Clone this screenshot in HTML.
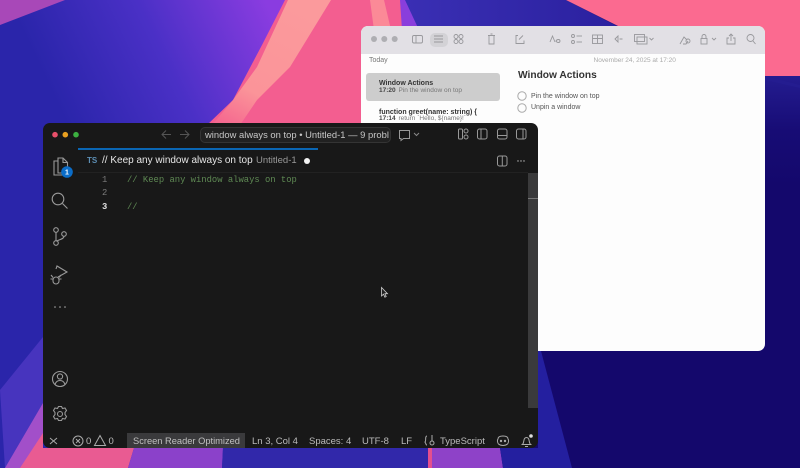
<!DOCTYPE html>
<html><head><meta charset="utf-8"><style>
html,body{margin:0;padding:0;width:800px;height:468px;overflow:hidden;background:#14086c}
body{position:relative;font-family:"Liberation Sans",sans-serif}
svg{position:absolute;overflow:visible}
.t{position:absolute;white-space:nowrap;line-height:1}
.ic{fill:none;stroke:#999;stroke-width:1}
.nt{fill:none;stroke:#98989c;stroke-width:.9}
</style></head><body>
<svg style="left:0;top:0" width="800" height="468" viewBox="0 0 800 468">
<defs>
<linearGradient id="p" gradientUnits="userSpaceOnUse" x1="60" y1="110" x2="270" y2="10"><stop offset="0" stop-color="#2a25aa"/><stop offset=".5" stop-color="#4a30c6"/><stop offset="1" stop-color="#8a3ce0"/></linearGradient>
<linearGradient id="b" gradientUnits="userSpaceOnUse" x1="288" y1="0" x2="225" y2="125"><stop offset="0" stop-color="#fb9a9c"/><stop offset=".7" stop-color="#fb9499"/><stop offset="1" stop-color="#f5688f"/></linearGradient>
<linearGradient id="n" x1="0" y1="0" x2="0" y2="1"><stop offset="0" stop-color="#241c90"/><stop offset=".5" stop-color="#170c75"/><stop offset="1" stop-color="#14086c"/></linearGradient>
<linearGradient id="t" x1="0" y1="0" x2="1" y2="0"><stop offset="0" stop-color="#3a2fb4"/><stop offset="1" stop-color="#2a209e"/></linearGradient>
</defs>
<rect width="800" height="468" fill="#14086c"/>
<rect x="0" y="0" width="300" height="468" fill="url(#p)"/>
<polygon points="0,0 65,0 0,25" fill="#a848b8"/>
<polygon points="285,0 405,0 405,30 361,125 207,125 233,100 262,45" fill="#f35e90"/>
<polygon points="288,0 331,0 290,67 257,100 240,125 212,125 233,100 257,67" fill="url(#b)"/>
<polygon points="370,0 384,0 391,30 374,30" fill="#fb8a97"/>
<polygon points="400,0 406,0 420,30 402,30" fill="#8a3edc"/>
<polygon points="405,0 566,0 625,30 419,30" fill="url(#t)"/>
<polygon points="566,0 800,0 800,85 765,76 620,27" fill="#fb6a90"/>
<rect x="765" y="76" width="35" height="110" fill="url(#n)"/>
<polygon points="765,76 800,85 800,88 765,80" fill="#241c90"/>
<polygon points="0,390 43,337 43,468 5,468" fill="#4734be"/>
<polygon points="5,468 43,403 43,468" fill="#a24fc9"/>
<polygon points="20,468 43,433 43,448 134,448 128,468" fill="#e95b92"/>
<polygon points="134,448 223,448 222,468 128,468" fill="#8b41ca"/>
<polygon points="223,448 428,448 428,468 222,468" fill="#3128aa"/>
<rect x="428" y="448" width="4" height="20" fill="#e44f8e"/>
<polygon points="432,448 500,448 503,468 432,468" fill="#8e42c8"/>
<polygon points="500,448 538,448 538,351 541,351 572,468 503,468" fill="#241f9f"/>
</svg>

<!-- Notes -->
<div style="position:absolute;left:361px;top:26px;width:404px;height:325px;background:#fdfdfd;border-radius:7px;overflow:hidden">
<div style="position:absolute;left:0;top:0;width:404px;height:27.500px;background:#e2e0e5"></div>
<div style="position:absolute;left:5px;top:47px;width:134px;height:28px;background:#cdcdcd;border-radius:3px"></div>
</div>
<svg style="left:361px;top:26px" width="404" height="60" viewBox="0 0 404 60">
<g fill="#aeaeb2"><circle cx="13" cy="13" r="3"/><circle cx="23.300" cy="13" r="3"/><circle cx="33.700" cy="13" r="3"/></g>
<rect x="69" y="7" width="18" height="14" rx="5" fill="#d3d2d6"/>
<g class="nt">
<rect x="51.500" y="9.500" width="10" height="7.500" rx="1.500"/><path d="M55 9.500v7.500"/>
<path d="M73 10h9M73 13h9M73 16h9"/>
<circle cx="95" cy="10.500" r="2"/><circle cx="100" cy="10.500" r="2"/><circle cx="95" cy="15.500" r="2"/><circle cx="100" cy="15.500" r="2"/>
<path d="M127 9.500h7M128 9.500v8.500h5v-8.500M129.500 8h2"/>
<path d="M157 9.500h-2v8h8v-3M158 13.500l4-4"/>
<path d="M189 16l2.500-6 2.500 6M195 15c1-2 4-2 4 0s-3 2-4 0z"/>
<circle cx="212" cy="10" r="1.500"/><path d="M215.500 10h5.500"/><circle cx="212" cy="16" r="1.500"/><path d="M215.500 16h5.500"/>
<rect x="231.500" y="9" width="10" height="8.500"/><path d="M231.500 12.500h10M236.500 9v8.500"/>
<path d="M254 13l3-3v6zM258.500 13h3"/>
<rect x="273.500" y="8.500" width="10" height="7"/><rect x="276" y="11" width="10" height="7"/><path d="M288.500 12l2 2 2-2"/>
<path d="M319 18l4-7 3 3M322 18h3l2-3"/><circle cx="327" cy="15" r="2"/>
<rect x="340" y="12.500" width="6" height="5.500"/><path d="M341 12.500v-2a2 2 0 014 0v2M351 12l2 2 2-2"/>
<path d="M368 12h-2v6h8v-6h-2M370 15V8M368 10l2-2 2 2"/>
<circle cx="389.500" cy="12" r="3.500"/><path d="M392 15l2.500 3"/>
</g>
</svg>
<div class="t" style="left:369px;top:56.500px;font-size:7px;color:#777">Today</div>
<div class="t" style="left:593.500px;top:58px;font-size:6.500px;color:#aaa">November 24, 2025 at 17:20</div>
<div class="t" style="left:379px;top:80px;font-size:7px;font-weight:bold;color:#333">Window Actions</div>
<div class="t" style="left:379px;top:87.500px;font-size:6.500px;font-weight:bold;color:#444">17:20 <span style="font-weight:normal;color:#777;margin-left:1px">Pin the window on top</span></div>
<div class="t" style="left:379px;top:108.500px;font-size:7px;font-weight:bold;color:#333">function greet(name: string) {</div>
<div class="t" style="left:379px;top:116px;font-size:6.500px;font-weight:bold;color:#444">17:14 <span style="font-weight:normal;color:#777;margin-left:1px">return `Hello, ${name}!`</span></div>
<div class="t" style="left:518px;top:70.500px;font-size:10.200px;font-weight:bold;color:#333">Window Actions</div>
<svg style="left:517px;top:90px" width="14" height="24"><g fill="none" stroke="#aaa"><circle cx="5" cy="6" r="4.200"/><circle cx="5" cy="18" r="4.200"/></g></svg>
<div class="t" style="left:531px;top:92.500px;font-size:7px;color:#555">Pin the window on top</div>
<div class="t" style="left:531px;top:103.500px;font-size:7px;color:#555">Unpin a window</div>

<!-- VS Code -->
<div style="position:absolute;left:43px;top:123px;width:495px;height:325px;background:#181818;border-radius:7px;overflow:hidden">
<div style="position:absolute;left:35px;top:25px;width:240px;height:2px;background:#0a66b4"></div>
<div style="position:absolute;left:485px;top:50px;width:10px;height:235px;background:#3a3a3b"></div>
<div style="position:absolute;left:485px;top:75px;width:10px;height:1px;background:#777"></div>
<div style="position:absolute;left:35px;top:49px;width:450px;height:1px;background:#222"></div>
<div style="position:absolute;left:84px;top:309.500px;width:118px;height:15.500px;background:#3a3a3c"></div>
</div>
<div style="position:absolute;left:200px;top:127px;width:191px;height:16px;background:#212121;border:1px solid #343434;border-radius:5px;box-sizing:border-box"></div>
<svg style="left:43px;top:123px" width="495" height="325" viewBox="0 0 495 325">
<circle cx="12" cy="11.700" r="2.800" fill="#e8506a"/><circle cx="22.300" cy="11.700" r="2.800" fill="#e8a020"/><circle cx="33" cy="11.700" r="2.800" fill="#3cb040"/>
<path d="M128 11.500h-9M123 7.500l-4 4 4 4M137 11.500h9M142 7.500l4 4-4 4" fill="none" stroke="#555" stroke-width="1"/>
<g class="ic">
<path d="M358 15.500h-1.500v-8h10v8h-6l-2.500 2z"/>
<path d="M371 10l2.500 2.500 2.500-2.500" stroke="#888"/>
<rect x="415.500" y="6" width="4" height="10" rx="1"/><circle cx="423" cy="8" r="2"/><circle cx="423" cy="14" r="2"/>
<rect x="434.500" y="6" width="9.500" height="10" rx="2"/><path d="M438 6v10"/>
<rect x="454.500" y="6" width="9.500" height="10" rx="2"/><path d="M454.500 12.500h9.500"/>
<rect x="473.500" y="6" width="9.500" height="10" rx="2"/><path d="M480 6v10"/>
<rect x="454.500" y="33" width="9.500" height="10" rx="2"/><path d="M459.300 33v10"/>
</g>
<g fill="#bbb"><circle cx="475" cy="38" r=".7"/><circle cx="478" cy="38" r=".7"/><circle cx="481" cy="38" r=".7"/></g>
<circle cx="264" cy="38" r="3" fill="#f2f2f2"/>
<!-- activity -->
<g fill="none" stroke="#999" stroke-width="1.100">
<path d="M15 35h5l4.500 4.500V50H15zM15 38h-4v14h9v-2"/><path d="M20 35v4.500h4.500"/>
<circle cx="15" cy="76" r="5.800"/><path d="M19.500 80.500l5 5"/>
<circle cx="13" cy="107" r="2.300"/><circle cx="13" cy="120" r="2.300"/><circle cx="21" cy="111" r="2.300"/><path d="M13 109.300v8.400M21 113.300c0 3-5 3-7.500 5"/>
<path d="M13 146l1-3 10 6-9 5"/><path d="M10 157a3 3 0 016 0v1a3 3 0 01-6 0zM8 152l2 2.500M18 152l-2 2.500M7.500 156h2.500M18.500 156h-2.500"/>
<circle cx="17" cy="256" r="7.500"/><circle cx="17" cy="253.500" r="2.600"/><path d="M12 261.500c1-3 2.500-4 5-4s4 1 5 4"/>
<path d="M14.500 285.500l1-2h3l1 2 2.500-.5 1.500 2.500-1.500 2V291.500l1.500 2-1.500 2.500-2.500-.5-1 2h-3l-1-2-2.500.5-1.500-2.500 1.500-2V289.500l-1.500-2 1.500-2.500z"/><circle cx="17" cy="291" r="2.500"/>
</g>
<g fill="#aaa"><circle cx="12" cy="184" r=".8"/><circle cx="17" cy="184" r=".8"/><circle cx="22" cy="184" r=".8"/></g>
<circle cx="24" cy="49" r="5.800" fill="#0b6dc8"/>
<text x="24" y="51.500" font-size="7" font-weight="bold" fill="#fff" text-anchor="middle" font-family="Liberation Sans">1</text>
<!-- status -->
<g fill="none" stroke="#aaa" stroke-width="1">
<path d="M7 315l3.500 3-3.500 3M14 315l-3.500 3 3.500 3"/>
<circle cx="35" cy="318" r="5"/><path d="M33 316l4 4M37 316l-4 4"/>
<path d="M57 312.500l5.500 10h-11z"/>
<path d="M384 313c-2 0-1 3-1.500 5s-1 0 0 2 .5 2 1.500 2"/>
<path d="M389 312v6"/><circle cx="389" cy="320" r="2"/>
<path d="M455 316c0-2 2-3 5-3s5 1 5 3c1 1 .5 4-.5 5-1 .8-3 1.500-4.500 1.500s-3.500-.7-4.500-1.500c-1-1-1.500-4-.5-5z"/>
<path d="M478.500 321.500h10M479.500 321.500c2-2 .5-7 4-7s2 5 4 7M482 323.500h3"/>
</g>
<circle cx="458" cy="318" r="1.200" fill="#aaa"/><circle cx="462" cy="318" r="1.200" fill="#aaa"/>
<circle cx="488" cy="313" r="1.800" fill="#ddd"/>
</svg>
<div style="position:absolute;left:201px;top:128px;width:189px;height:14px;overflow:hidden">
<div class="t" style="left:4px;top:2px;font-size:9.400px;color:#c8c8c8;letter-spacing:.02px">window always on top • Untitled-1 — 9 probl</div></div>
<div class="t" style="left:87px;top:157px;font-size:8px;font-weight:bold;color:#5d8fb5">TS</div>
<div class="t" style="left:102px;top:155.500px;font-size:10px;color:#e6e6e6">// Keep any window always on top</div>
<div class="t" style="left:256px;top:156px;font-size:9.500px;color:#999">Untitled-1</div>
<div style="position:absolute;font-family:'Liberation Mono',monospace;font-size:8.850px;line-height:1;white-space:pre">
<div class="t" style="left:102px;top:176px;color:#7a7a7a">1</div>
<div class="t" style="left:102px;top:189px;color:#7a7a7a">2</div>
<div class="t" style="left:102px;top:202.500px;color:#ddd;font-weight:bold">3</div>
<div class="t" style="left:127px;top:176px;color:#5f8a54">// Keep any window always on top</div>
<div class="t" style="left:127px;top:202.500px;color:#5f8a54">//</div>
</div>
<svg style="left:379px;top:286px" width="10" height="13"><path d="M2.500 1.500v8.500l2-1.800 1.400 3 1.300-.6-1.300-2.900h2.600z" fill="#222" stroke="#ccc" stroke-width=".8"/></svg>
<div class="t" style="left:86px;top:436.500px;font-size:9.500px;color:#bbb">0</div>
<div class="t" style="left:108.500px;top:436.500px;font-size:9.500px;color:#bbb">0</div>
<div class="t" style="left:133px;top:436.500px;font-size:9.300px;color:#c0c0c0">Screen Reader Optimized</div>
<div class="t" style="left:252px;top:436.500px;font-size:9.500px;color:#bbb">Ln 3, Col 4</div>
<div class="t" style="left:309px;top:436.500px;font-size:9.500px;color:#bbb">Spaces: 4</div>
<div class="t" style="left:362px;top:436.500px;font-size:9.500px;color:#bbb">UTF-8</div>
<div class="t" style="left:401px;top:436.500px;font-size:9.500px;color:#bbb">LF</div>
<div class="t" style="left:440px;top:436.500px;font-size:9.500px;color:#bbb">TypeScript</div>
</body></html>
